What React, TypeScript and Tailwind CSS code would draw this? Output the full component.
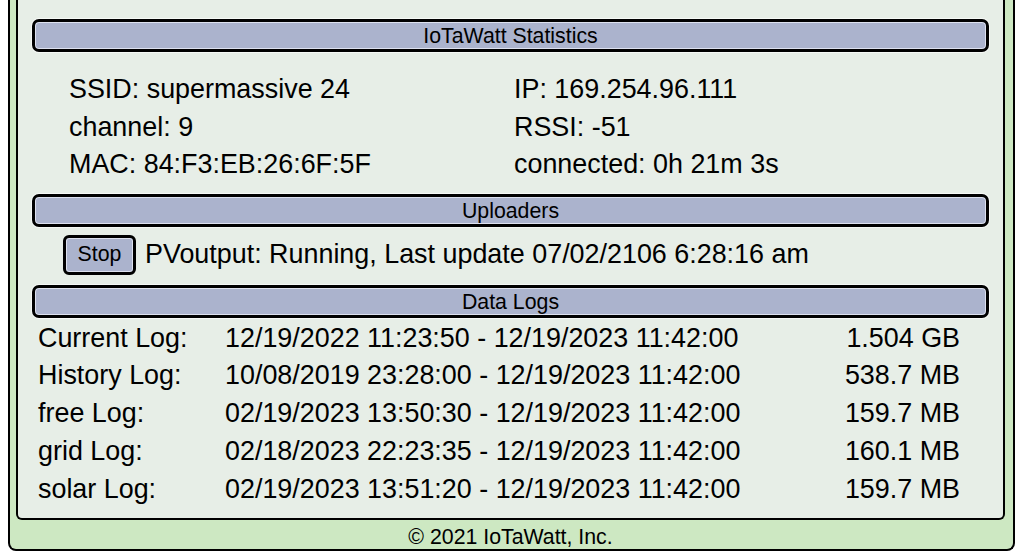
import React from "react";

const Bar = ({ title }: { title: string }) => (
  <div className="h-[33px] border-[3px] border-black rounded-[7px] bg-[#abb3cd] shadow-[0_0_0_1px_#f6f9f6,inset_0_0_0_1px_#dde1ef] flex items-center justify-center pt-[2px] text-[21.3px] leading-none text-black">
    {title}
  </div>
);

const logs = [
  ["Current Log:", "12/19/2022 11:23:50 - 12/19/2023 11:42:00", "1.504 GB"],
  ["History Log:", "10/08/2019 23:28:00 - 12/19/2023 11:42:00", "538.7 MB"],
  ["free Log:", "02/19/2023 13:50:30 - 12/19/2023 11:42:00", "159.7 MB"],
  ["grid Log:", "02/18/2023 22:23:35 - 12/19/2023 11:42:00", "160.1 MB"],
  ["solar Log:", "02/19/2023 13:51:20 - 12/19/2023 11:42:00", "159.7 MB"],
];

export default function App() {
  return (
    <div className="w-[1024px] h-[559px] bg-white overflow-hidden font-['Liberation_Sans',Arial,sans-serif] text-black">
      <div className="ml-[8px] w-[1007px] border-[2.5px] border-t-0 border-black rounded-b-[8px] bg-[#cde8c2] pl-[6px] pr-[8px]">
        <div className="border-[2.5px] border-t-0 border-black rounded-b-[6px] bg-[#e7eee7] pl-[14px] pr-[14px] pt-[19px] pb-[10px]">
          <Bar title="IoTaWatt Statistics" />
          <div className="grid grid-cols-[445px_1fr] pl-[37px] pt-[19px] text-[26.9px] leading-[37.6px]">
            <div>SSID: supermassive 24</div>
            <div>IP: 169.254.96.111</div>
            <div>channel: 9</div>
            <div>RSSI: -51</div>
            <div>MAC: 84:F3:EB:26:6F:5F</div>
            <div>connected: 0h 21m 3s</div>
          </div>
          <div className="mt-[10px]">
            <Bar title="Uploaders" />
          </div>
          <div className="flex items-center pl-[31px] mt-[8px] mb-[10px]">
            <button className="w-[73px] h-[40px] border-[3px] border-black rounded-[6px] bg-[#abb3cd] shadow-[inset_0_0_0_1px_#dde1ef] text-[21.3px] leading-none flex items-center justify-center">
              Stop
            </button>
            <span className="ml-[9px] text-[26.9px] leading-none">
              PVoutput: Running, Last update 07/02/2106 6:28:16 am
            </span>
          </div>
          <Bar title="Data Logs" />
          <div className="mt-[2px] pl-[6px] pr-[29px] text-[26.9px] leading-[37.7px]">
            {logs.map((r) => (
              <div key={r[0]} className="grid grid-cols-[187px_1fr_auto]">
                <div>{r[0]}</div>
                <div>{r[1]}</div>
                <div className="text-right">{r[2]}</div>
              </div>
            ))}
          </div>
        </div>
        <div className="h-[29px] flex items-center justify-center text-[21.3px] leading-none pt-[6px]">
          © 2021 IoTaWatt, Inc.
        </div>
      </div>
    </div>
  );
}
